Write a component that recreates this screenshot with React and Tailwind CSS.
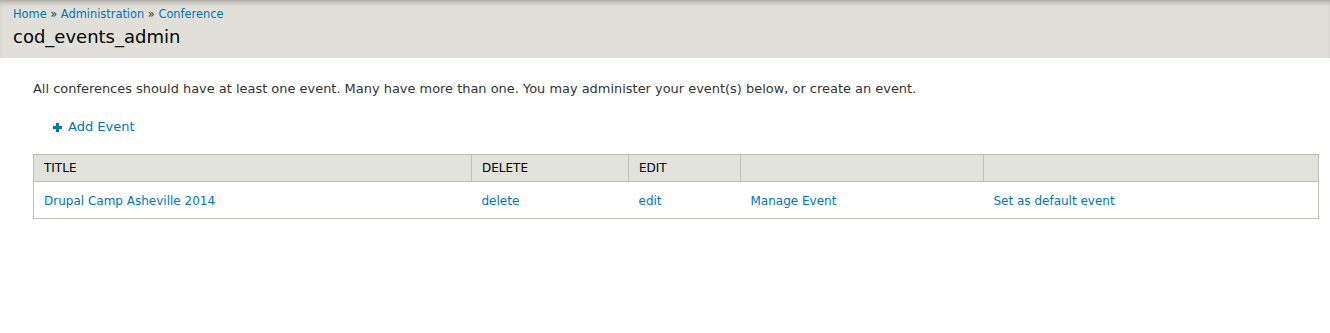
const columns = [
  { label: 'Title', width: 'w-[438px]' },
  { label: 'Delete', width: 'w-[157px]' },
  { label: 'Edit', width: 'w-[112px]' },
  { label: '', width: 'w-[243px]' },
  { label: '', width: '' },
]

const rows = [['Drupal Camp Asheville 2014', 'delete', 'edit', 'Manage Event', 'Set as default event']]

function PlusIcon() {
  return (
    <svg width="9" height="9" viewBox="0 0 9 9" className="fill-current">
      <rect x="3" y="0" width="3" height="9" />
      <rect x="0" y="3" width="9" height="3" />
    </svg>
  )
}

export default function App() {
  return (
    <div className="min-h-[333px] bg-white font-['DejaVu_Sans',sans-serif] text-[13px] text-[#333]">
      <div className="h-[58px] bg-[#e0e0d8] px-[13px] pt-[6px] shadow-[inset_0_5px_6px_-4px_rgba(0,0,0,0.35)]">
        <div className="text-[11.4px] leading-[16px] text-[#0074bd]">
          <a href="#">Home</a>
          <span className="text-[#333]"> » </span>
          <a href="#">Administration</a>
          <span className="text-[#333]"> » </span>
          <a href="#">Conference</a>
        </div>
        <h1 className="mt-[3px] text-[18px] leading-[24px] text-black">cod_events_admin</h1>
      </div>

      <div className="px-[33px] pt-[22px]">
        <p className="text-[12.95px] leading-[18px] text-[#333]">
          All conferences should have at least one event. Many have more than one. You may administer your event(s) below, or create an event.
        </p>

        <a href="#" className="mt-[20px] ml-[20px] flex items-center gap-[6px] text-[13px] leading-[18px] text-[#0074bd]">
          <PlusIcon />
          Add Event
        </a>

        <table className="mt-[18px] w-[1286px] table-fixed border-collapse border border-[#bebfb9] text-[12px]">
          <thead>
            <tr className="h-[27px] bg-[#e1e2dc]">
              {columns.map((col, i) => (
                <th
                  key={i}
                  className={`${col.width} border border-[#bebfb9] px-[10px] text-left font-normal uppercase text-black`}
                >
                  {col.label}
                </th>
              ))}
            </tr>
          </thead>
          <tbody>
            {rows.map((row, i) => (
              <tr key={i} className="h-[37px]">
                {row.map((cell, j) => (
                  <td key={j} className="px-[10px] pt-[2px] text-[#0074bd]">
                    <a href="#">{cell}</a>
                  </td>
                ))}
              </tr>
            ))}
          </tbody>
        </table>
      </div>
    </div>
  )
}
